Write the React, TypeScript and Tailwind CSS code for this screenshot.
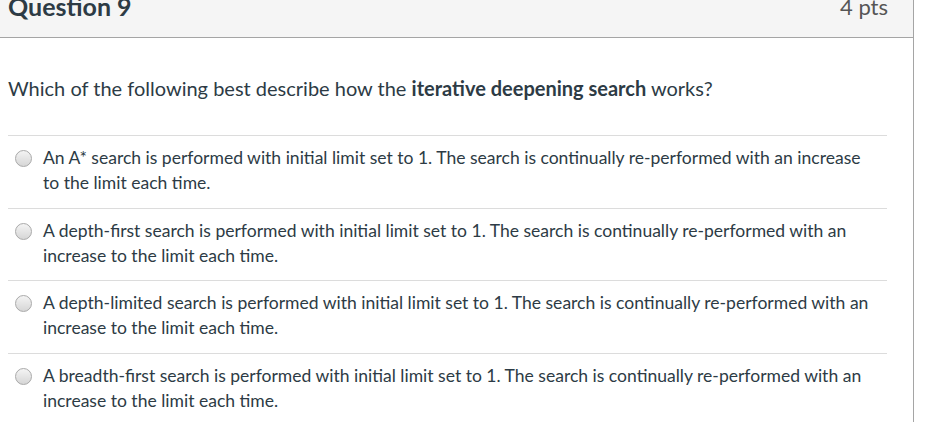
const answers = [
  "An A* search is performed with initial limit set to 1. The search is continually re-performed with an increase to the limit each time.",
  "A depth-first search is performed with initial limit set to 1. The search is continually re-performed with an increase to the limit each time.",
  "A depth-limited search is performed with initial limit set to 1. The search is continually re-performed with an increase to the limit each time.",
  "A breadth-first search is performed with initial limit set to 1. The search is continually re-performed with an increase to the limit each time.",
]

function Radio() {
  return (
    <span className="mt-[5px] w-[17px] h-[17px] shrink-0 rounded-full border border-[#a9a9a9] bg-gradient-to-b from-[#f4f4f4] to-[#d6d6d6]" />
  )
}

export default function App() {
  return (
    <div
      className="w-[914px] h-[422px] overflow-hidden bg-white border-r border-[#a5a5a5] text-[#2d3b45]"
      style={{ fontFamily: "Lato, 'Noto Sans', sans-serif" }}
    >
      <header className="h-[38px] bg-[#f5f5f5] border-b border-[#a5a5a5] flex items-start justify-between pl-[8px] pr-[25px]">
        <h2 className="-mt-[9px] text-[25px] leading-[30px] font-bold">Question 9</h2>
        <span className="-mt-[8px] text-[22px] leading-[30px] text-[#555]">4 pts</span>
      </header>

      <div className="pl-[8px] pr-[26px]">
        <p className="pt-[37px] pb-[33px] text-[20px] leading-[27px]">
          Which of the following best describe how the <strong className="font-bold">iterative deepening search</strong> works?
        </p>

        <div>
          {answers.map((a) => (
            <div key={a} className="flex gap-[11px] border-t border-[#dcdcdc] pl-[7px] pr-[16px] pt-[9px] pb-[12.5px]">
              <Radio />
              <span className="text-[17.55px] leading-[25px]">{a}</span>
            </div>
          ))}
        </div>
      </div>
    </div>
  )
}
